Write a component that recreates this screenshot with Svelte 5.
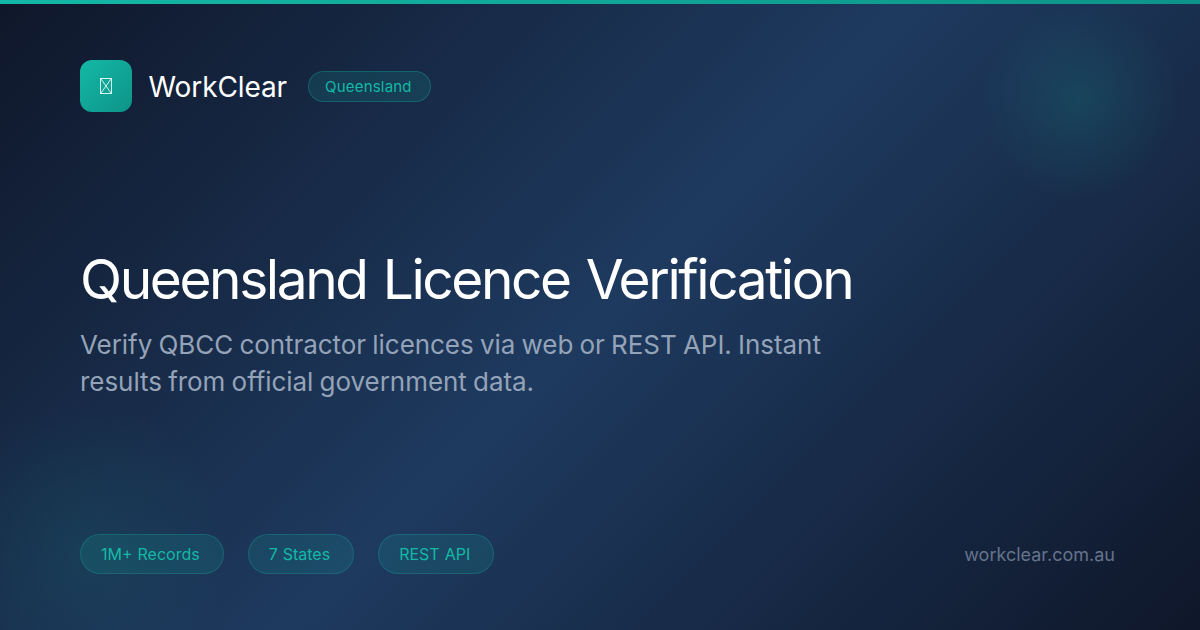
<script>
  const stats = ['1M+ Records', '7 States', 'REST API'];
</script>

<div class="card">
  <div class="topbar"></div>
  <div class="glow glow-right"></div>
  <div class="glow glow-left"></div>

  <div class="content">
    <header class="brand">
      <div class="logo">
        <svg width="12" height="16" viewBox="0 0 12 16" fill="none" stroke="#d6f5ef" stroke-width="1">
          <rect x="0.5" y="0.5" width="11" height="15" />
          <path d="M1 1l10 14M11 1L1 15" />
        </svg>
      </div>
      <span class="name">WorkClear</span>
      <span class="state">Queensland</span>
    </header>

    <main class="hero">
      <h1>Queensland Licence Verification</h1>
      <p>Verify QBCC contractor licences via web or REST API. Instant results from official government data.</p>
    </main>

    <footer class="foot">
      <div class="stats">
        {#each stats as stat}
          <span class="stat">{stat}</span>
        {/each}
      </div>
      <span class="domain">workclear.com.au</span>
    </footer>
  </div>
</div>

<style>
  :global(body) {
    margin: 0;
  }

  .card {
    position: relative;
    width: 1200px;
    height: 630px;
    overflow: hidden;
    background: linear-gradient(135deg, #0f172a 0%, #1e3a5f 50%, #0f172a 100%);
    font-family: Inter, "Liberation Sans", sans-serif;
  }

  .topbar {
    position: absolute;
    top: 0;
    left: 0;
    right: 0;
    height: 4px;
    background: linear-gradient(90deg, #14b8a6, #0d9488);
  }

  .glow {
    position: absolute;
    border-radius: 50%;
  }

  .glow-right {
    top: 0;
    right: 20px;
    width: 200px;
    height: 200px;
    background: radial-gradient(circle, rgba(20, 184, 166, 0.15) 0%, rgba(20, 184, 166, 0) 70%);
  }

  .glow-left {
    bottom: -70px;
    left: -70px;
    width: 300px;
    height: 300px;
    background: radial-gradient(circle, rgba(20, 184, 166, 0.1) 0%, rgba(20, 184, 166, 0) 70%);
  }

  .content {
    position: relative;
    box-sizing: border-box;
    height: 630px;
    padding: 60px 85px 56px 80px;
    display: flex;
    flex-direction: column;
  }

  .brand {
    display: flex;
    align-items: center;
  }

  .logo {
    width: 52px;
    height: 52px;
    border-radius: 12px;
    background: linear-gradient(135deg, #14b8a6, #0d9488);
    display: flex;
    align-items: center;
    justify-content: center;
  }

  .name {
    margin: 2px 0 0 16.5px;
    font-size: 28px;
    color: #fff;
    letter-spacing: -0.1px;
  }

  .state {
    margin-left: 21px;
    padding: 6px 18px 6px 16px;
    border-radius: 20px;
    border: 1px solid rgba(20, 184, 166, 0.3);
    background: rgba(20, 184, 166, 0.15);
    color: #14b8a6;
    font-size: 15px;
    line-height: 17px;
    letter-spacing: 0.2px;
  }

  .hero {
    margin-top: 134px;
  }

  h1 {
    margin: 0;
    font-size: 55px;
    font-weight: 400;
    line-height: 67px;
    color: #fff;
    letter-spacing: -2.4px;
    word-spacing: 3px;
  }

  p {
    margin: 13px 0 0;
    width: 760px;
    font-size: 26px;
    line-height: 37px;
    color: #94a3b8;
    letter-spacing: -0.05px;
    word-spacing: -1px;
  }

  .foot {
    margin-top: auto;
    display: flex;
    align-items: center;
    justify-content: space-between;
  }

  .stats {
    display: flex;
    gap: 24px;
  }

  .stat {
    padding: 10px 23px 10px 20px;
    border-radius: 24px;
    border: 1px solid rgba(20, 184, 166, 0.25);
    background: rgba(20, 184, 166, 0.15);
    color: #14b8a6;
    font-size: 16px;
    line-height: 18px;
    word-spacing: 0.5px;
  }

  .domain {
    font-size: 18px;
    color: #64748b;
  }
</style>
